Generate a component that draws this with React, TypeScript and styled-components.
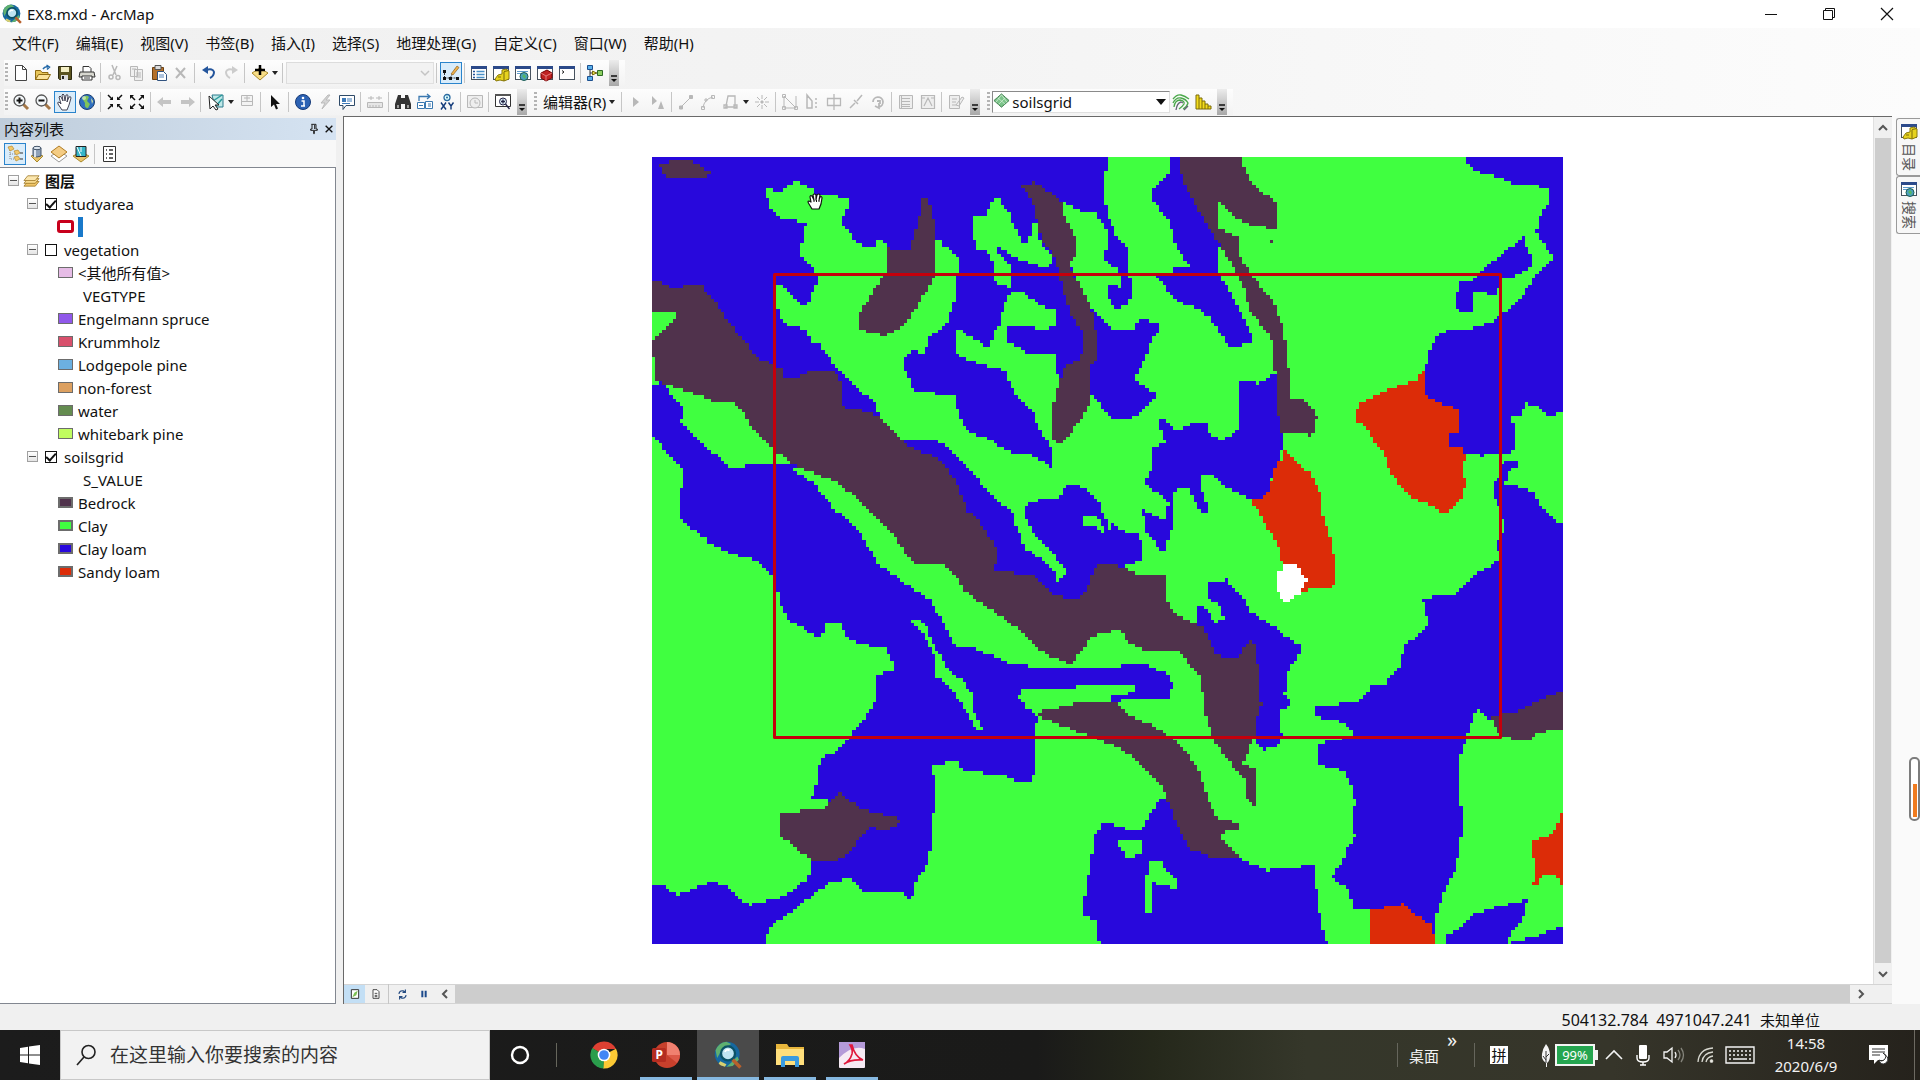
import React, { useMemo } from "react";
import styled, { createGlobalStyle, css } from "styled-components";

const GlobalStyle = createGlobalStyle`
  * { box-sizing: border-box; }
  html, body { margin: 0; padding: 0; }
  body {
    font-family: "Noto Sans", "Noto Sans CJK SC", sans-serif;
    font-size: 15px;
    color: #111;
    background: #f0f0f0;
    overflow: hidden;
  }
  button, select, input { font: inherit; color: inherit; }
  button { border: 0; background: none; padding: 0; }
  h1, h2, ul, p { margin: 0; padding: 0; font-weight: 400; font-size: inherit; }
  ul { list-style: none; }
`;

/* ------------------------------------------------------------------ */
/* Soil raster: each tile is a set of class polygons, burned to a grid */
/* ------------------------------------------------------------------ */

type SoilClass = "clay" | "loam" | "rock" | "sandy" | "none";

const SOIL: Record<SoilClass, string> = {
  clay: "#40ff40",
  loam: "#2808dc",
  rock: "#50324c",
  sandy: "#dc2c08",
  none: "#ffffff",
};

interface Tile {
  x: number;
  y: number;
  w: number;
  h: number;
  dx: number;
  dy: number;
  base: SoilClass;
  shapes: [SoilClass, string][];
}

const EXTENT_W = 2733;
const EXTENT_H = 2361;
const COLS = 264;
const ROWS = 228;

const TILES: Tile[] = [
  {
    x: 0, y: 0, w: 1344, h: 1149, dx: -6, dy: -21, base: "loam",
    shapes: [
      ["clay", "348,116 367,116 372,127 400,125 408,108 430,104 432,96 452,98 470,106 485,116 497,130 520,135 566,135 570,146 600,150 590,180 580,200 580,230 598,240 610,265 640,290 678,285 682,272 700,272 714,285 714,300 850,300 858,272 875,270 880,288 900,300 930,325 930,365 921,375 921,440 905,475 890,520 870,540 840,555 830,590 815,612 800,608 790,597 775,610 758,630 765,660 780,690 790,725 850,730 855,738 920,738 922,775 935,820 970,850 1020,870 1060,895 1070,905 1140,915 1180,935 1212,968 1212,910 1190,870 1165,830 1150,785 1100,735 1075,690 1065,660 1000,645 912,612 912,535 930,540 960,560 990,572 1010,590 1022,585 1030,545 1050,530 1055,490 1062,460 1085,430 1120,428 1145,445 1165,465 1220,480 1218,525 1180,540 1130,525 1075,525 1068,560 1080,580 1140,612 1222,615 1222,675 1232,690 1220,740 1240,800 1325,738 1345,755 1380,795 1380,1110 1375,1110 1365,1075 1350,1055 1325,1035 1295,1010 1250,1000 1240,1020 1235,1040 1185,1045 1140,1060 1128,1070 1128,1110 1145,1140 1180,1180 1200,1200 1120,1200 1110,1150 1095,1120 1085,1080 1050,1060 1010,1020 985,990 960,960 935,935 915,910 870,875 755,873 735,850 700,810 680,785 680,755 640,730 615,705 580,670 550,640 520,600 510,580 485,575 470,540 400,520 390,490 380,460 378,408 400,408 420,430 440,445 455,465 475,465 485,430 500,400 502,380 490,355 455,320 455,285 465,240 470,215 390,208 365,180 358,150 348,145"],
      ["clay", "1028,147 1052,147 1058,165 1078,190 1090,220 1105,245 1115,275 1135,275 1145,235 1155,210 1162,215 1165,255 1180,290 1205,320 1212,345 1175,352 1130,335 1085,320 1055,295 1035,293 1045,310 1060,330 1085,350 1085,415 1028,395 1028,330 1010,305 975,300 975,270 965,240 970,200 1010,198 1015,180"],
      ["clay", "1232,155 1270,170 1290,185 1340,192 1350,220 1375,240 1375,290 1362,320 1370,335 1360,385 1370,430 1375,460 1380,528 1360,515 1340,495 1325,480 1300,420 1275,375 1255,340 1255,325 1275,320 1260,250 1235,200"],
      ["clay", "40,700 60,708 150,738 200,755 255,762 285,795 320,840 370,890 430,945 270,948 250,957 230,945 180,900 130,855 92,820 98,775 70,740 45,710"],
      ["clay", "432,948 500,965 560,985 610,1035 680,1105 755,1185 770,1200 660,1200 640,1160 600,1115 550,1075 500,1010 465,980 435,965"],
      ["clay", "6,850 30,875 50,910 98,955 98,1005 92,1015 92,1110 120,1130 150,1155 235,1200 6,1200"],
      ["clay", "1296,1095 1320,1095 1330,1102 1380,1108 1380,1150 1350,1140 1325,1125 1296,1125"],
      ["rock", "28,45 65,35 130,35 150,50 185,70 165,84 60,84 40,70"],
      ["rock", "6,388 35,395 70,415 110,408 155,408 190,445 220,495 260,545 300,595 330,628 370,640 400,658 402,685 440,682 490,660 540,660 565,675 575,715 580,770 640,782 690,800 740,855 760,878 800,900 860,925 895,960 925,1010 950,1080 985,1110 1010,1150 1035,1200 770,1200 700,1125 630,1055 560,995 480,965 430,945 360,888 310,840 280,785 255,762 180,750 150,735 70,712 18,690 6,625"],
      ["rock", "815,147 832,150 845,185 858,255 850,385 800,470 770,520 705,558 632,540 632,490 665,430 695,385 715,365 715,295 740,302 780,295 795,250 808,200"],
      ["rock", "1112,110 1150,95 1185,115 1232,155 1245,200 1270,250 1285,300 1283,320 1255,330 1265,370 1300,420 1325,480 1335,530 1345,580 1335,635 1325,640 1325,740 1305,790 1265,845 1228,885 1212,870 1212,800 1205,780 1215,740 1230,690 1240,655 1290,625 1300,600 1300,550 1260,490 1240,430 1232,385 1215,320 1180,280 1160,210 1150,170 1130,120"],
      ["clay", "6,490 78,490 70,515 45,540 20,560 6,575"],
      ["clay", "6,625 18,625 18,690 25,700 6,705"],
    ],
  },
  {
    x: 1344, y: 0, w: 1389, h: 1149, dx: 1344, dy: -21, base: "clay",
    shapes: [
      ["loam", "0,21 18,21 18,60 8,90 12,130 20,190 38,225 50,260 80,292 80,375 92,390 100,410 90,440 78,465 50,478 30,465 25,430 18,405 45,403 52,415 62,410 62,375 50,358 22,340 10,325 18,295 28,270 22,240 0,215"],
      ["loam", "205,21 245,21 255,80 275,130 310,190 335,235 360,275 358,310 352,340 352,368 375,400 400,450 420,490 440,520 462,578 430,582 415,592 385,590 370,560 345,525 330,500 290,475 230,455 205,425 165,370 215,368 220,356 268,350 245,310 222,280 210,220 185,185 155,140 165,110 205,75"],
      ["loam", "0,510 15,515 40,542 100,543 120,505 145,505 150,517 182,522 178,545 160,560 145,600 130,640 105,685 125,705 172,735 140,770 110,795 85,810 40,810 0,770"],
      ["loam", "527,668 548,850 548,900 530,940 515,975 510,1015 480,1045 455,1048 390,1020 350,990 340,970 300,970 302,1010 310,1040 328,1088 300,1085 285,1050 265,1010 230,1012 222,1035 218,1080 215,1130 200,1195 185,1195 140,1145 130,1090 125,1072 150,1090 195,1110 205,1060 190,1040 155,1020 135,992 155,960 155,895 195,880 185,850 175,815 200,803 205,825 230,840 280,820 315,815 330,855 370,872 420,835 415,780 415,698 465,698 475,705 500,685"],
      ["loam", "0,1072 10,1090 18,1105 20,1140 28,1142 28,1115 45,1125 65,1142 118,1152 122,1200 0,1200 0,1145 20,1150 0,1110"],
      ["loam", "1098,21 1389,21 1389,780 1355,798 1335,792 1315,765 1280,760 1265,792 1235,795 1245,860 1240,905 1200,912 1150,912 1145,925 1130,912 1095,912 1085,895 1050,890 1048,852 1078,848 1078,780 1020,760 965,738 960,690 975,670 985,610 1010,560 1040,542 1100,542 1180,515 1210,490 1250,460 1290,400 1360,320 1335,290 1310,245 1325,190 1348,155 1345,115 1290,105 1240,100 1190,80 1140,70 1105,45"],
      ["loam", "1272,262 1280,290 1295,320 1290,355 1245,380 1200,388 1195,437 1165,437 1160,425 1118,427 1118,487 1085,487 1070,475 1075,395 1115,395 1150,355 1190,325 1235,290"],
      ["loam", "1212,937 1230,928 1265,940 1250,955 1222,960 1222,980 1212,1005 1250,1010 1300,1025 1320,1070 1360,1110 1389,1125 1389,1200 1200,1200 1212,1120 1195,1060 1185,1040 1185,990 1200,985 1205,950"],
      ["rock", "235,21 422,21 430,50 455,100 490,130 528,155 528,238 480,230 440,222 400,195 352,147 352,235 390,250 420,262 415,310 440,355 470,395 510,440 530,480 548,525 557,580 557,645 568,655 570,740 615,752 635,775 650,805 640,845 628,860 620,850 560,850 548,862 540,820 530,770 527,670 518,640 516,570 480,520 445,480 435,420 400,350 375,310 355,275 320,225 285,160 260,120 240,60"],
      ["rock", "506,268 517,268 517,281 506,281"],
      ["sandy", "770,780 785,755 830,735 890,710 950,690 970,665 970,735 1020,760 1078,780 1078,848 1048,852 1050,890 1085,895 1097,915 1090,960 1097,1000 1090,1035 1060,1065 1045,1090 1025,1090 1000,1065 950,1052 910,1020 875,970 850,910 820,870 805,840 768,810"],
      ["sandy", "550,895 580,925 630,970 660,1030 668,1090 690,1160 695,1200 540,1200 510,1145 480,1095 455,1048 480,1045 510,1015 518,980 530,940 548,925"],
    ],
  },
  {
    x: 0, y: 1149, w: 1344, h: 1212, dx: -6, dy: 1149, base: "clay",
    shapes: [
      ["loam", "160,0 200,20 250,42 320,60 370,105 385,165 400,210 412,240 440,255 475,275 515,295 525,248 570,248 590,290 640,315 705,320 722,350 735,385 722,398 682,400 680,470 655,520 610,575 590,600 560,635 520,650 505,685 505,720 485,768 475,773 545,773 520,808 500,900 485,960 485,990 470,1020 430,1050 380,1075 320,1088 300,1098 270,1075 235,1040 190,1025 140,1042 85,1065 60,1055 35,1035 0,1035 0,1220 340,1220 360,1160 420,1120 480,1070 540,1030 600,1015 640,1055 755,1055 775,1075 788,1070 792,1030 830,975 845,905 852,780 855,730 845,690 838,673 885,672 895,660 918,662 940,695 1055,703 1090,720 1140,722 1150,700 1150,580 1165,530 1130,505 1108,475 1110,445 1300,440 1310,433 1380,432 1380,380 1140,382 1130,370 1070,368 1010,340 960,320 915,318 900,285 860,215 845,185 780,140 680,68 655,20 640,0"],
      ["loam", "1020,0 1380,0 1380,180 1100,180 1020,90"],
      ["loam", "1380,845 1365,850 1330,885 1325,950 1310,1030 1300,1100 1300,1125 1340,1140 1348,1220 1380,1220"],
      ["clay", "778,235 800,235 830,265 848,310 880,360 900,395 940,425 968,465 972,510 990,550 1003,575 985,575 965,540 940,500 905,445 860,410 852,350 830,300 805,260 780,245"],
      ["clay", "1110,0 1175,0 1200,30 1235,75 1252,95 1218,130 1212,90 1170,55 1130,30"],
      ["rock", "735,0 1030,0 1045,40 1030,90 1150,108 1210,165 1280,180 1310,145 1330,95 1355,68 1380,75 1380,275 1330,290 1280,345 1268,380 1255,370 1190,345 1130,290 1070,240 1010,200 945,155 920,110 880,68 790,68 760,30"],
      ["rock", "1165,530 1170,515 1250,498 1300,485 1380,482 1380,612 1350,600 1290,578 1220,550"],
      ["rock", "390,818 445,818 450,808 520,808 548,775 575,758 600,785 640,808 755,838 740,860 700,872 665,862 630,890 600,935 560,962 485,962 440,925 390,885"],
    ],
  },
  {
    x: 1344, y: 1149, w: 1389, h: 1212, dx: 1344, dy: 1149, base: "clay",
    shapes: [
      ["loam", "0,0 125,0 125,60 70,80 0,80"],
      ["loam", "163,0 203,0 203,20 185,35 165,15"],
      ["loam", "320,122 370,122 378,108 385,125 430,170 450,215 490,240 540,275 605,320 595,350 570,380 558,410 555,465 575,490 540,515 540,560 548,590 525,622 490,628 465,600 465,400 350,360 300,275 288,250 290,193 315,200 330,225 345,252 370,235 358,195 320,175"],
      ["loam", "0,382 65,382 70,370 125,372 200,400 220,435 205,470 195,482 130,480 100,475 45,485 30,483 40,465 100,460 110,443 100,433 0,433"],
      ["loam", "1200,60 1180,70 1110,115 1060,165 965,175 978,210 985,260 920,310 900,360 895,398 870,400 860,430 810,433 800,465 780,483 720,492 650,497 643,510 645,530 725,545 755,575 755,590 715,600 650,610 652,670 700,685 735,695 755,740 765,790 755,830 765,890 740,930 720,975 695,1010 745,1050 758,1105 810,1108 1000,1180 1005,1160 1005,1140 1030,1060 1060,1000 1080,930 1088,850 1080,760 1080,655 1095,610 1110,560 1130,505 1170,540 1250,530 1389,470 1389,0 1195,0"],
      ["loam", "848,390 860,390 860,399 848,399"],
      ["loam", "0,855 20,848 40,855 70,865 120,875 160,810 185,775 210,780 320,945 405,950 440,965 500,990 640,975 650,1060 665,1150 685,1220 0,1220"],
      ["loam", "1285,1078 1275,1090 1270,1130 1235,1180 1215,1220 1045,1220 1035,1180 1080,1170 1115,1125 1200,1098"],
      ["loam", "1389,1158 1340,1175 1290,1195 1230,1202 1225,1220 1389,1220"],
      ["clay", "50,900 122,900 122,940 85,960 65,930"],
      ["clay", "145,963 180,963 205,995 238,1025 225,1042 185,1040 160,1022 160,1118 132,1118 132,1030 145,1000"],
      ["rock", "0,70 60,80 120,105 195,108 205,200 250,235 310,265 350,345 410,355 440,310 460,300 472,350 475,450 485,490 470,540 465,590 450,610 440,655 428,668 465,690 465,770 472,795 458,803 440,770 435,720 395,675 340,600 320,540 305,440 295,400 230,330 130,330 90,310 55,265 0,285"],
      ["rock", "0,485 45,485 90,525 165,560 240,610 285,670 310,730 330,790 350,835 410,848 432,862 370,875 362,895 385,915 415,948 320,948 270,925 235,860 205,790 185,740 140,690 70,630 0,600"],
      ["rock", "1170,528 1250,515 1320,480 1389,452 1389,567 1320,578 1285,605 1260,600 1200,590"],
      ["sandy", "528,0 692,0 705,60 710,120 690,148 620,150 595,170 560,80 545,60"],
      ["sandy", "810,1108 890,1098 910,1085 945,1125 1000,1160 1003,1220 810,1220"],
      ["sandy", "1389,808 1370,860 1345,890 1298,902 1298,950 1310,960 1310,1010 1298,1035 1315,1030 1330,1005 1370,1010 1389,1040"],
      ["none", "550,78 590,78 620,115 605,155 575,180 562,190 545,175 530,150 528,95 548,90"],
    ],
  },
];

function burnRaster(): Record<SoilClass, string> {
  const cw = EXTENT_W / COLS;
  const ch = EXTENT_H / ROWS;
  const grid: SoilClass[][] = Array.from({ length: ROWS }, () => new Array<SoilClass>(COLS).fill("clay"));

  for (const t of TILES) {
    const parsed = t.shapes.map(([cls, pts]) => ({
      cls,
      pts: pts.split(" ").map((p) => {
        const [x, y] = p.split(",").map(Number);
        return [x + t.dx, y + t.dy];
      }),
    }));
    for (let r = 0; r < ROWS; r++) {
      const cy = (r + 0.5) * ch;
      if (cy < t.y || cy >= t.y + t.h) continue;
      const c0 = Math.max(0, Math.ceil(t.x / cw - 0.5));
      const c1 = Math.min(COLS - 1, Math.ceil((t.x + t.w) / cw - 0.5) - 1);
      for (let c = c0; c <= c1; c++) grid[r][c] = t.base;
      for (const { cls, pts } of parsed) {
        const xs: number[] = [];
        for (let i = 0; i < pts.length; i++) {
          const [ax, ay] = pts[i];
          const [bx, by] = pts[(i + 1) % pts.length];
          if (ay <= cy !== by <= cy) xs.push(ax + ((cy - ay) / (by - ay)) * (bx - ax));
        }
        xs.sort((a, b) => a - b);
        for (let k = 0; k + 1 < xs.length; k += 2) {
          const from = Math.max(c0, Math.ceil(xs[k] / cw - 0.5));
          const to = Math.min(c1, Math.ceil(xs[k + 1] / cw - 0.5) - 1);
          for (let c = from; c <= to; c++) grid[r][c] = cls;
        }
      }
    }
  }

  const out: Record<SoilClass, string> = { clay: "", loam: "", rock: "", sandy: "", none: "" };
  grid.forEach((row, r) => {
    let start = 0;
    for (let c = 1; c <= COLS; c++) {
      if (c === COLS || row[c] !== row[start]) {
        out[row[start]] += `M${start} ${r}h${c - start}v1h${start - c}z`;
        start = c;
      }
    }
  });
  return out;
}

const MapSvg = styled.svg`
  display: block;
  height: 100%;
  max-width: 100%;
`;

function SoilMap() {
  const paths = useMemo(burnRaster, []);
  return (
    <MapSvg viewBox="0 0 911 787" role="img" aria-label="soilsgrid">
      <g transform={`scale(${911 / COLS} ${787 / ROWS})`} shapeRendering="crispEdges">
        {(Object.keys(paths) as SoilClass[]).map((k) => (
          <path key={k} d={paths[k]} fill={SOIL[k]} />
        ))}
      </g>
      <rect x="122.5" y="117.5" width="726" height="463" fill="none" stroke="#c4000c" strokeWidth="3" strokeLinejoin="round" />
      <g transform="translate(155 36)">
        <path
          d="M5 16L2 11Q0 8 2 8L4 9L3 4Q3 2 5 3L7 7L6 2Q7 0 9 2L9 7L10 2Q12 0 13 2L12 7L13 4Q15 3 15 5L14 11L12 16Z"
          fill="#fff"
          stroke="#111"
          strokeWidth="1.2"
          strokeLinejoin="round"
        />
        <path d="M7 7v2M9.500 7v2M12 7v2" stroke="#111" strokeWidth="1" />
      </g>
    </MapSvg>
  );
}

/* ------------------------------------------------------------------ */
/* Icons                                                               */
/* ------------------------------------------------------------------ */

const G = "#b8b8b8";
const win = (
  <>
    <rect x="1.500" y="2.500" width="15" height="13" fill="#fff" stroke="#47525e" />
    <path d="M1 2h16v3H1z" fill="#2c4a8a" />
  </>
);

const ICONS: Record<string, React.ReactNode> = {
  newdoc: <path d="M3.500 1.500h7l4 4v11h-11zM10.500 1.500v4h4" fill="#fff" stroke="#444" />,
  open: (
    <>
      <path d="M1.500 15.500v-9h5l1.500 2h6v7z" fill="#e8c65a" stroke="#8f6b12" />
      <path d="M1.500 15.500l3-5h12l-3 5z" fill="#fbe39a" stroke="#8f6b12" />
      <path d="M9 5q2-3 5-2M12.500 1l3 2-2.500 2.500" fill="none" stroke="#2268a8" strokeWidth="1.500" />
    </>
  ),
  save: (
    <>
      <path d="M2.500 2.500h13v13h-12l-1-1z" fill="#5b5420" stroke="#2c2a12" />
      <path d="M5 3h8v5H5z" fill="#f3eec4" />
      <path d="M5 11h7v5H5z" fill="#ddd" />
      <path d="M6 12h2v3H6z" fill="#222" />
    </>
  ),
  print: (
    <>
      <path d="M5 8V2.500h6l2 2V8" fill="#fff" stroke="#333" />
      <path d="M2 8h14l1 5H1z" fill="#d8d8d0" stroke="#333" />
      <path d="M4 12h10v4H4z" fill="#fff" stroke="#333" />
      <path d="M6 14h6" stroke="#444" />
    </>
  ),
  cut: (
    <g fill="none" stroke={G} strokeWidth="1.500">
      <path d="M6 1l4 10M11 2L7 11" />
      <circle cx="5" cy="13" r="2" />
      <circle cx="12" cy="13.500" r="2" />
    </g>
  ),
  copy: <path d="M2.500 2.500h7v10h-7zM6.500 5.500h8v11h-8zM8 9h5M8 11h5M8 13h5M4 5h4" fill="#f0f0f0" stroke={G} />,
  paste: (
    <>
      <path d="M2.500 3.500h11v12h-11z" fill="#b4702a" stroke="#6d4212" />
      <path d="M5 1.500h6v4H5z" fill="#ddd" stroke="#555" />
      <path d="M7.500 7.500h6l3 3v6h-9z" fill="#fff" stroke="#30527f" />
      <path d="M9 11h5M9 13h5" stroke="#5a86ba" />
    </>
  ),
  del: <path d="M4 4l9 10M13 4L4 14" stroke={G} strokeWidth="2" />,
  undo: (
    <>
      <path d="M6 6q7-2 8 2 0 4-4 6" fill="none" stroke="#24559c" strokeWidth="2" />
      <path d="M2 6l6-4v8z" fill="#24559c" />
    </>
  ),
  redo: (
    <>
      <path d="M12 6q-7-2-8 2 0 4 4 6" fill="none" stroke="#ccc" strokeWidth="2" />
      <path d="M16 6l-6-4v8z" fill="#ccc" />
    </>
  ),
  add: (
    <>
      <path d="M1 9l8-5 8 5-8 7z" fill="#f7dd86" stroke="#a98a2c" />
      <path d="M9 1v10M4 6h10" stroke="#000" strokeWidth="2.500" />
    </>
  ),
  editor: (
    <>
      <path d="M2.500 14h13M2.500 9v5M8 14l6-10" fill="none" stroke="#333" strokeDasharray="2 1" />
      <path d="M1 13h3v3H1zM7 13h3v3H7zM14 13h3v3h-3zM1 6h3v3H1z" fill="#111" />
      <path d="M9 10l6-8 2 1.500L11 11z" fill="#f0b24c" stroke="#805010" strokeWidth=".6" />
    </>
  ),
  toc: (
    <>
      {win}
      <path d="M3 7.500h2M3 10.500h2M3 13.500h2" stroke="#24559c" strokeWidth="1.500" />
      <path d="M6.500 7.500h8M6.500 10.500h8M6.500 13.500h8" stroke="#4a90c8" strokeWidth="1.500" />
    </>
  ),
  catalog: (
    <>
      {win}
      <path d="M6 11l4-1V6l4-1 3 2v8l-5 2-4-1-4 1-1-2z" fill="#e6d21e" stroke="#8a7a0a" />
      <path d="M12 7.500l5-1M12 8v9M6 13h3" stroke="#7a6a08" />
    </>
  ),
  search: (
    <>
      {win}
      <path d="M3 7.500h11M3 9.500h5" stroke="#5d9acb" />
      <circle cx="10" cy="12.500" r="4" fill="#4c9fc0" stroke="#1c5c50" />
      <path d="M8 12l2-2 2 2-1 3z" fill="#55b665" />
    </>
  ),
  toolbox: (
    <>
      {win}
      <path d="M5 9l6-3 5 3v5l-6 3-5-3z" fill="#c02222" stroke="#700" />
      <path d="M5 9l5 3 6-3M10 12v5" stroke="#f0a0a0" strokeWidth=".7" fill="none" />
    </>
  ),
  python: (
    <>
      {win}
      <path d="M4 6.500l2 1.500-2 1.500" fill="none" stroke="#222" />
    </>
  ),
  model: (
    <>
      <path d="M4 3v12M4 9h10" stroke="#333" fill="none" />
      <path d="M1.500 1.500h5v4h-5zM1.500 12.500h5v4h-5z" fill="#5ab0ea" stroke="#1c4f8e" />
      <path d="M6.500 7l4 2-4 2z" fill="#e8dc4a" stroke="#7d6f10" />
      <path d="M11.500 6.500h5v5h-5z" fill="#8ccf60" stroke="#2c6a24" />
    </>
  ),
  zoomin: (
    <>
      <path d="M11 11l5 5" stroke="#a57848" strokeWidth="3" />
      <circle cx="7.500" cy="7.500" r="5.500" fill="#f4f8fa" stroke="#555" strokeWidth="1.300" />
      <path d="M4.500 7.500h6M7.500 4.500v6" stroke="#111" strokeWidth="2" />
    </>
  ),
  zoomout: (
    <>
      <path d="M11 11l5 5" stroke="#a57848" strokeWidth="3" />
      <circle cx="7.500" cy="7.500" r="5.500" fill="#f4f8fa" stroke="#555" strokeWidth="1.300" />
      <path d="M4.500 7.500h6" stroke="#111" strokeWidth="2" />
    </>
  ),
  pan: (
    <path
      d="M6 17l-4-6q-1-2 1-2l2 2-2-7q1-2 2 0l2 4-1-6q1-2 2 0l1 6 1-6q2-1 2 1l-1 6 2-5q2-1 2 1l-2 7-2 5z"
      fill="#fff"
      stroke="#445"
    />
  ),
  globe: (
    <>
      <circle cx="9" cy="9" r="7.500" fill="#2f6fc0" stroke="#1c3f70" />
      <path d="M4 5q4-4 7-1l-2 4 3 3-2 4q-4 0-3-5z" fill="#7fc45a" />
      <path d="M13 5l2 3-1 3z" fill="#e0e8a0" />
      <circle cx="6" cy="5" r="2" fill="#fff" opacity=".5" />
    </>
  ),
  fixin: (
    <g stroke="#111" strokeWidth="1.500" fill="#111">
      <path d="M2 2l4 4M16 2l-4 4M2 16l4-4M16 16l-4-4" />
      <path d="M3.500 7H7V3.500zM14.500 7H11V3.500zM3.500 11H7v3.500zM14.500 11H11v3.500z" stroke="none" />
    </g>
  ),
  fixout: (
    <g stroke="#111" strokeWidth="1.500" fill="#111">
      <path d="M3 3l4 4M15 3l-4 4M3 15l4-4M15 15l-4-4" />
      <path d="M2 6V2h4zM16 6V2h-4zM2 12v4h4zM16 12v4h-4z" stroke="none" />
    </g>
  ),
  back: <path d="M1 9l6-5v3h8v4H7v3z" fill="#c4c4c4" />,
  forward: <path d="M17 9l-6-5v3H3v4h8v3z" fill="#c4c4c4" />,
  selfeat: (
    <>
      <path d="M5 2h11v12H8z" fill="#bfe8e8" stroke="#2a7a8c" />
      <path d="M6 8l9-6M9 13l6-7" stroke="#2a9a9c" strokeWidth="1.500" />
      <path d="M2 3l1 13 3-3 3 4 2-1-3-4h4z" fill="#fff" stroke="#222" />
    </>
  ),
  clearsel: <path d="M3.500 2.500h11v10h-11zM3.500 8.500h11M9 2v6M6 5h6" fill="#f3f3f3" stroke={G} />,
  arrow: <path d="M5 2v12l3-2.500 2 5 2-1-2-4.500h4z" fill="#111" />,
  info: (
    <>
      <circle cx="9" cy="9" r="7.500" fill="#2c62b4" stroke="#163a78" />
      <circle cx="9" cy="5" r="1.300" fill="#fff" />
      <path d="M7.500 8H10v5h1M7 13h4" stroke="#fff" strokeWidth="1.500" fill="none" />
    </>
  ),
  link: <path d="M12 2L5 10h4l-3 6 8-9h-4l4-5z" fill="#d4d4d4" stroke="#bbb" />,
  popup: (
    <>
      <path d="M1.500 2.500h15v10H8l-3 4v-4H1.500z" fill="#fff" stroke="#2e4a68" />
      <path d="M4 5h4v4H4z" fill="#3e7ab8" />
      <path d="M9 6h5M9 8h5M4 10.500h8" stroke="#3e7ab8" />
    </>
  ),
  measure: (
    <>
      <path d="M1.500 9.500h15v5h-15z" fill="#e6e6e6" stroke={G} />
      <path d="M4 12v2M7 12v2M10 12v2M13 12v2M2 5h6M10 5h6M5 3v4M13 3v4" stroke={G} />
    </>
  ),
  find: (
    <>
      <path d="M4 2h3v3h4V2h3l3 9v5h-6v-5H7v5H1v-5z" fill="#333" />
      <path d="M3 12h2v3H3zM13 12h2v3h-2z" fill="#999" />
    </>
  ),
  route: (
    <g fill="#fff" stroke="#3a78b0">
      <path d="M3 8V3.500h10M11 1l3 2.500L11 6" fill="none" strokeWidth="1.300" />
      <path d="M1.500 9.500h7v6h-7zM3 12.500h4" />
      <path d="M9.500 8.500h7v7h-7zM12 11h3M12 13h3" />
    </g>
  ),
  gotoxy: (
    <>
      <circle cx="9" cy="4.500" r="3" fill="#dff" stroke="#2a6aa0" strokeWidth="1.300" />
      <circle cx="9" cy="4.500" r="1" fill="#2a6aa0" />
      <path d="M3 9.500l5 7M8 9.500l-5 7M10.500 9.500l2.500 3.500 2.500-3.500M13 13v3.500" stroke="#123a7a" strokeWidth="1.400" fill="none" />
    </>
  ),
  time: (
    <g fill="#eee" stroke={G}>
      <path d="M1.500 2.500h15v12h-15z" />
      <circle cx="9" cy="10" r="5" />
      <path d="M9 7v3h3" />
    </g>
  ),
  viewer: (
    <>
      <path d="M1.500 1.500h15v12h-15z" fill="#fff" stroke="#333" />
      <path d="M1 1h16v2H1z" fill="#555" />
      <circle cx="9" cy="8.500" r="3.500" fill="#dceef8" stroke="#224" />
      <path d="M7 8.500h4M9 6.500v4M11.500 11l4 5" stroke="#224" strokeWidth="1.300" />
    </>
  ),
  edittool: <path d="M6 4v10l6-5z" fill={G} />,
  editanno: <path d="M3 3v9l5-4zM9 16l3-8 3 8z" fill={G} />,
  line: <path d="M4 14L14 4M2.500 13h3v3h-3zM12.500 2.500h3v3h-3z" stroke={G} fill={G} />,
  arc: <path d="M4 15Q5 6 14 4M2.500 13.500h3v3h-3zM12.500 2.500h3v3h-3zM6 6h2v2H6z" stroke={G} fill="none" />,
  trace: <path d="M3 14h12M4 13L6 3h7v10M2 12h3v3H2zM12 12h3v3h-3z" stroke={G} fill="none" strokeWidth="1.300" />,
  point: <path d="M9 2v4M9 12v4M2 9h4M12 9h4M4 4l3 3M14 4l-3 3M4 14l3-3M14 14l-3-3M8 8h2v2H8z" stroke={G} fill={G} />,
  vertices: <path d="M3 3l12 12M3 3v12h12V3M1.500 1.500h3v3h-3zM13.500 13.500h3v3h-3zM1.500 13.500h3v3h-3z" stroke={G} fill="none" />,
  reshape: <path d="M4 2v13h5V8zM13 5v2M13 9v2M13 13v2" stroke={G} fill="none" strokeWidth="1.500" />,
  cutpoly: <path d="M2.500 5.500h13v7h-13zM9 1v16" stroke={G} fill="none" strokeWidth="1.300" />,
  split: <path d="M3 15L8 10M10 8l5-6M7 7l4 4" stroke={G} fill="none" strokeWidth="1.500" />,
  rotate: <path d="M4 9a5 5 0 1 1 6 5M10 10v5l-4-2M8 8h3v3" stroke={G} fill="none" strokeWidth="1.800" />,
  attrs: <path d="M2.500 2.500h13v13h-13zM5 5.500h8M5 8.500h8M5 11.500h8M5 13.500h8M4.500 3v12" stroke={G} fill="#eee" />,
  sketch: <path d="M2.500 2.500h13v13h-13zM5 13l4-8 4 8M3 5h3M12 5h3" stroke={G} fill="#eee" strokeWidth="1.200" />,
  feature: <path d="M2.500 2.500h10v13h-10zM5 6h5M5 9h4M5 12h4M9 12l6-8 2 1-5 8z" stroke={G} fill="#eee" />,
  contour: (
    <g fill="none" strokeWidth="1.300">
      <path d="M1 6q4-5 8-4t8 4M1 10q3-6 8-5t7 5q-1 4-5 6M2 14q1-7 6-7 5 1 4 4-1 2-5 5" stroke="#4aa84a" />
      <path d="M4 17q1-7 5-8l2 1M12 17l4-4" stroke="#667" />
    </g>
  ),
  histogram: (
    <>
      <path d="M2 2h3v3h3v3h3v3h3v2h3v3H2z" fill="#f4dc1c" stroke="#7a6a08" />
      <path d="M5 5v11M8 8v8M11 11v5M14 13v3" stroke="#7a6a08" />
    </>
  ),
  listorder: (
    <>
      <path d="M4 5v9h5M4 9h5" stroke="#888" fill="none" strokeDasharray="1 1" />
      <path d="M2 2l4-1 2 3-4 2zM8 6l4-1 2 3-4 2zM8 12l4-1 2 3-4 2z" fill="#f3c96a" stroke="#b98a2c" strokeWidth=".7" />
      <path d="M14 8h3M14 14h3" stroke="#333" />
    </>
  ),
  listsource: (
    <>
      <path d="M3 11l6-2 6 2-6 6z" fill="#e9c46c" stroke="#a98a2c" />
      <path d="M5 3v8q4 2 8 0V3z" fill="#8fa2b8" stroke="#45566a" />
      <path d="M7 5v7" stroke="#dce6f0" strokeWidth="2" />
      <ellipse cx="9" cy="3" rx="4" ry="1.700" fill="#dce6f0" stroke="#45566a" />
    </>
  ),
  listvis: (
    <>
      <path d="M1 11l8-5 8 5-8 6z" fill="#fff" stroke="#999" />
      <path d="M1 7l8-6 8 6-8 6z" fill="#f4cc84" stroke="#b07c22" />
    </>
  ),
  listsel: (
    <>
      <path d="M1 11l8-4 8 4-8 6z" fill="#e9c46c" stroke="#a98a2c" />
      <path d="M4 1.500h10v10H4z" fill="#35b5c8" stroke="#222" />
      <path d="M5 2l4 9M9 2v5" stroke="#fff" />
    </>
  ),
  options: (
    <>
      <path d="M3.500 1.500h12v15h-12z" fill="#fff" stroke="#333" />
      <path d="M6 5h1M9 5h4M6 9h1M9 9h4M6 13h1M9 13h4" stroke="#333" strokeWidth="1.300" />
    </>
  ),
  layers: (
    <>
      <path d="M1 15l4-5h12l-4 5z" fill="#f1c668" stroke="#9a7420" strokeWidth=".8" />
      <path d="M1 12l4-5h12l-4 5z" fill="#f7d98c" stroke="#9a7420" strokeWidth=".8" />
      <path d="M1 9l4-5h12l-4 5z" fill="#fbe6ae" stroke="#9a7420" strokeWidth=".8" />
    </>
  ),
  rasterlayer: (
    <>
      <path d="M1 8l8-7 8 7-8 7z" fill="#7cc48a" stroke="#3d7a4a" />
      <path d="M5 5l8 7M9 2L3 10M13 5L6 12M9 2l6 8" stroke="#d6f0d8" strokeWidth=".8" />
    </>
  ),
  dataview: (
    <>
      <path d="M3.500 2.500h11v13h-11z" fill="#fff" stroke="#333" strokeWidth="1.500" />
      <path d="M5 14l3-7 5-3-2 7z" fill="#7cbf54" />
    </>
  ),
  layoutview: <path d="M4.500 2.500h6l3 3v10h-9zM7 8h4M7 11h4M7 13h4" fill="#fff" stroke="#333" strokeWidth="1.300" />,
  refresh: (
    <path d="M4 8q1-5 6-4l3 2M13 2v4H9M14 10q-1 5-6 4l-3-2M5 16v-4h4" fill="none" stroke="#234a80" strokeWidth="1.600" />
  ),
  pause: <path d="M5 4h3v10H5zM10 4h3v10h-3z" fill="#1c4a8c" />,
  pin: <path d="M5 2h7v7h2v2H9.500v5h-1v-5H4V9h2V2M10 3v6" fill="none" stroke="#222" strokeWidth="1.500" />,
  close: <path d="M4 4l10 10M14 4L4 14" stroke="#111" strokeWidth="2" />,
  arcmap: (
    <>
      <circle cx="8.500" cy="8.500" r="8" fill="#1668a0" />
      <path d="M1 6q2-5 7-5.500l3 1.500-6 4-3 5zM11 14l4-4 1 2-4 4-4 .5z" fill="#5fb070" />
      <path d="M4 13l4 2-1 1.500q-3-.5-4-2z" fill="#d8d070" />
      <circle cx="9" cy="8" r="4.500" fill="#bfe4f2" stroke="#0b5266" strokeWidth="1.500" />
      <path d="M7 7q1-2 3-1" stroke="#fff" strokeWidth="1.200" />
      <path d="M12 12l5 5" stroke="#b8602c" strokeWidth="2.200" />
    </>
  ),
};

function Icon({ name, size = 18 }: { name: string; size?: number }) {
  return (
    <svg width={size} height={size} viewBox="0 0 18 18" fill="none" aria-hidden="true">
      {ICONS[name]}
    </svg>
  );
}

/* ------------------------------------------------------------------ */
/* Window frame                                                        */
/* ------------------------------------------------------------------ */

const Screen = styled.div`
  display: flex;
  flex-direction: column;
  height: 100vh;
  min-width: 1280px;
`;

const TitleBar = styled.header`
  display: flex;
  align-items: center;
  height: 28px;
  padding: 0 4px 0 2px;
  background: #fff;
`;

const WindowTitle = styled.h1`
  flex: 1;
  padding-left: 5px;
  font-size: 15px;
  line-height: 28px;
`;

const CaptionButton = styled.button`
  display: grid;
  place-items: center;
  width: 58px;
  height: 28px;
`;

const MenuBar = styled.nav`
  display: flex;
  gap: 17px;
  align-items: center;
  height: 30px;
  padding: 0 12px;
  background: linear-gradient(90deg, #f0f0f0 0, #f4f4f4 50%, #fcfcfc 100%);
`;

const MenuItem = styled.button`
  font-size: 15px;
  line-height: 24px;
  white-space: nowrap;
`;

const ToolbarArea = styled.div`
  background: linear-gradient(90deg, #f0f0f0 0, #f4f4f4 50%, #fcfcfc 100%);
`;

const ToolbarRow = styled.div`
  display: flex;
  align-items: center;
  height: 29px;
  padding-left: 4px;
`;

const Toolbar = styled.div`
  display: flex;
  align-items: center;
  height: 26px;
  background: linear-gradient(#fdfdfd, #f3f3f3);
`;

const Grip = styled.span`
  width: 3px;
  height: 20px;
  margin: 0 2px 0 1px;
  background: repeating-linear-gradient(#b4b4b4 0 2px, transparent 2px 4px);
`;

const ToolButton = styled.button<{ $active?: boolean; $wide?: boolean }>`
  display: flex;
  align-items: center;
  justify-content: center;
  width: ${(p) => (p.$wide ? 32 : 22)}px;
  height: 22px;
  ${(p) =>
    p.$active &&
    css`
      background: #d9ecfa;
      border: 1px solid #2a84cc;
    `}
`;

const Caret = styled.span`
  width: 0;
  margin-left: 3px;
  border: 3px solid transparent;
  border-top: 4px solid #222;
  border-bottom: 0;
`;

const Divider = styled.span`
  width: 1px;
  height: 20px;
  margin: 0 3px 0 2px;
  background: #c6c6c6;
`;

const Overflow = styled.button`
  display: flex;
  align-items: flex-end;
  justify-content: center;
  width: 10px;
  height: 26px;
  margin: 0 6px 0 3px;
  padding-bottom: 3px;
  background: linear-gradient(#ececec, #a8a8a8);
`;

const TextTool = styled.button`
  display: flex;
  align-items: center;
  height: 24px;
  padding: 0 4px;
  font-size: 15px;
  white-space: nowrap;
`;

const ComboBox = styled.label<{ $width: number; $disabled?: boolean }>`
  display: flex;
  align-items: center;
  width: ${(p) => p.$width}px;
  height: 22px;
  padding: 0 3px 0 0;
  border: 1px solid ${(p) => (p.$disabled ? "#dcdcdc" : "#8a8a8a")};
  border-right-color: #e0e0e0;
  border-bottom-color: #e0e0e0;
  background: ${(p) => (p.$disabled ? "#f2f2f2" : "#fff")};
`;

const ComboSelect = styled.select`
  flex: 1;
  min-width: 0;
  height: 20px;
  padding: 0 2px;
  border: 0;
  background: transparent;
  appearance: none;
  font-size: 15px;
  line-height: 20px;
`;

const Workspace = styled.main`
  display: flex;
  flex: 1;
  min-height: 0;
`;

/* ------------------------------------------------------------------ */
/* Table of contents                                                   */
/* ------------------------------------------------------------------ */

const TocPanel = styled.aside`
  display: flex;
  flex-direction: column;
  width: 336px;
  padding-top: 2px;
`;

const PanelHeader = styled.div`
  display: flex;
  align-items: center;
  height: 22px;
  padding-left: 4px;
  background: linear-gradient(90deg, #bfcddb, #d5e3f2);
`;

const PanelTitle = styled.h2`
  flex: 1;
  font-size: 15px;
  line-height: 22px;
`;

const PanelButton = styled.button`
  display: grid;
  place-items: center;
  width: 15px;
  height: 20px;
`;

const PanelTools = styled.div`
  display: flex;
  align-items: center;
  height: 27px;
  padding-left: 4px;
  background: #f8f8f8;
`;

const Tree = styled.ul`
  flex: 1;
  padding-top: 1px;
  border: 1px solid #828790;
  border-left: 0;
  background: #fff;
`;

const TreeRow = styled.li<{ $indent: number }>`
  display: flex;
  align-items: center;
  height: 23px;
  padding-left: ${(p) => p.$indent}px;
  line-height: 22px;
  white-space: nowrap;
`;

const TreeLabel = styled.label<{ $bold?: boolean; $gap?: number }>`
  padding-left: ${(p) => p.$gap ?? 7}px;
  font-weight: ${(p) => (p.$bold ? 700 : 400)};
`;

const LayersIcon = styled.span`
  display: flex;
  padding-left: 4px;
`;

const Expander = styled.button`
  display: grid;
  place-items: center;
  width: 11px;
  height: 11px;
  border: 1px solid #a0a0a0;
  background: linear-gradient(#fff, #e4e4e4);

  &::after {
    content: "";
    width: 7px;
    height: 1px;
    background: #555;
  }
`;

const LayerCheck = styled.input`
  appearance: none;
  display: grid;
  place-items: center;
  width: 12px;
  height: 12px;
  margin: 0 0 0 7px;
  border: 1px solid #111;
  background: #fff;

  &:checked::after {
    content: "";
    width: 4px;
    height: 8px;
    margin-top: -2px;
    border: solid #111;
    border-width: 0 2px 2px 0;
    transform: rotate(42deg);
  }
`;

const Swatch = styled.span<{ $color: string; $heavy?: boolean }>`
  width: 15px;
  height: 11px;
  border: ${(p) => (p.$heavy ? 2 : 1)}px solid #6c6c6c;
  background: ${(p) => p.$color};
`;

const OutlineSwatch = styled.span`
  width: 17px;
  height: 13px;
  border: 3px solid #c8001c;
  border-radius: 3px;
  background: #fff;
`;

const LabelCaret = styled.span`
  width: 5px;
  height: 20px;
  margin-left: 4px;
  background: #1979ca;
`;

/* ------------------------------------------------------------------ */
/* Map view                                                            */
/* ------------------------------------------------------------------ */

const MapColumn = styled.section`
  display: flex;
  flex-direction: column;
  flex: 1;
  min-width: 0;
  margin-left: 7px;
  border-left: 1px solid #696969;
  border-top: 1px solid #696969;
`;

const MapAndScroll = styled.div`
  display: flex;
  flex: 1;
  min-height: 0;
`;

const MapCanvas = styled.div`
  display: flex;
  flex: 1;
  justify-content: center;
  min-width: 0;
  padding: 40px 3px 40px 0;
  background: #fff;
`;

const VScroll = styled.div`
  display: flex;
  flex-direction: column;
  width: 19px;
  border-left: 1px solid #e0e0e0;
  background: #f0f0f0;
`;

const ScrollButton = styled.button`
  display: grid;
  place-items: center;
  flex: none;
  width: 18px;
  height: 21px;
`;

const VThumb = styled.span`
  flex: 1;
  margin: 0 1px;
  background: #cdcdcd;
`;

const BottomStrip = styled.div`
  display: flex;
  align-items: center;
  height: 20px;
  padding-right: 21px;
  border-top: 1px solid #d4d4d4;
  border-bottom: 1px solid #d4d4d4;
`;

const ViewButton = styled.button<{ $active?: boolean }>`
  display: grid;
  place-items: center;
  width: 21px;
  height: 18px;
  background: ${(p) => (p.$active ? "#c3dff5" : "none")};
`;

const HThumb = styled.span`
  flex: 1;
  height: 18px;
  background: #cdcdcd;
`;

const SideRail = styled.aside`
  display: flex;
  flex-direction: column;
  align-items: flex-end;
  width: 28px;
  padding-top: 2px;
  background: #fafafa;
`;

const SideTab = styled.button`
  display: flex;
  flex-direction: column;
  align-items: center;
  width: 24px;
  height: 58px;
  padding-top: 3px;
  gap: 3px;
  border: 1px solid #9a9a9a;
  border-right: 0;
  border-radius: 3px 0 0 3px;
  background: #f7f7f7;
  color: #555;
  font-size: 14px;
  line-height: 18px;

  span {
    writing-mode: vertical-rl;
    text-orientation: sideways;
  }
`;

const RailSpacer = styled.span`
  flex: 1 1 523px;
`;

const RailFoot = styled.span`
  flex: 1 1 183px;
`;

const Gauge = styled.div`
  display: flex;
  align-items: flex-end;
  justify-content: center;
  width: 11px;
  height: 64px;
  padding-bottom: 2px;
  border: 2px solid #7c7c7c;
  border-radius: 5px;
  background: #fff;

  &::after {
    content: "";
    width: 4px;
    height: 33px;
    background: #f07c20;
  }
`;

const StatusBar = styled.footer`
  display: flex;
  align-items: center;
  justify-content: flex-end;
  height: 26px;
  padding: 6px 100px 0 0;
  background: #f0f0f0;
  font-size: 15px;
  line-height: 20px;
`;

const Coordinate = styled.span`
  margin-right: 8px;
  font-size: 16px;
`;

/* ------------------------------------------------------------------ */
/* Taskbar                                                             */
/* ------------------------------------------------------------------ */

const Taskbar = styled.footer`
  display: flex;
  align-items: stretch;
  height: 50px;
  background: linear-gradient(90deg, #1c1c1c 0, #1a1a19 54%, #25281b 60%, #35372a 68%, #36352a 84%, #25221c 100%);
  color: #f2f2f2;
`;

const StartButton = styled.button`
  display: grid;
  place-items: center;
  width: 60px;
`;

const SearchBox = styled.label`
  display: flex;
  align-items: center;
  gap: 13px;
  width: 430px;
  padding: 0 14px;
  border: 1px solid #c8c8c8;
  background: #f2f2f2;
`;

const SearchInput = styled.input`
  flex: 1;
  min-width: 0;
  padding: 0;
  border: 0;
  background: transparent;
  font-size: 19px;
  line-height: 28px;

  &::placeholder {
    color: #333;
    opacity: 1;
  }
`;

const TaskButton = styled.button<{ $state?: "open" | "active" }>`
  display: grid;
  place-items: center;
  width: 62px;
  background: ${(p) => (p.$state === "active" ? "#4a4a4a" : "none")};
  background-clip: padding-box;
  ${(p) =>
    p.$state &&
    css`
      box-shadow: inset 0 -3px #86b8e0;
    `}
  border-right: ${(p) => (p.$state === "open" ? 5 : 0)}px solid transparent;
  border-left: ${(p) => (p.$state === "open" ? 5 : 0)}px solid transparent;
`;

const TaskDivider = styled.span<{ $left?: number; $right?: number }>`
  align-self: center;
  width: 1px;
  height: 24px;
  margin: 0 ${(p) => p.$right ?? 0}px 0 ${(p) => p.$left ?? 0}px;
  background: #66665c;
`;

const Tray = styled.div`
  display: flex;
  flex: 1;
  align-items: center;
  justify-content: flex-end;
`;

const TrayButton = styled.button<{ $width: number }>`
  display: grid;
  place-items: center;
  width: ${(p) => p.$width}px;
  height: 50px;
`;

const DesktopLabel = styled.button`
  padding: 0 0 0 11px;
  font-size: 15px;
`;

const Chevrons = styled.span`
  align-self: flex-start;
  width: 35px;
  padding-left: 8px;
  font-size: 20px;
  line-height: 20px;
`;

const Ime = styled.button`
  width: 18px;
  height: 18px;
  background: #fff;
  color: #111;
  font-size: 15px;
  line-height: 16px;
`;

const Clock = styled.time`
  width: 84px;
  margin-left: 6px;
  font-size: 15px;
  line-height: 23px;
  text-align: center;
`;

const PeekEdge = styled.span`
  width: 6px;
  height: 50px;
  margin-left: 4px;
  border-left: 1px solid #6d6a62;
`;

/* ------------------------------------------------------------------ */

const MENUS = ["文件(F)", "编辑(E)", "视图(V)", "书签(B)", "插入(I)", "选择(S)", "地理处理(G)", "自定义(C)", "窗口(W)", "帮助(H)"];

function Tools({ items, active }: { items: string[]; active?: string }) {
  return (
    <>
      {items.map((name, i) => {
        if (name === "|") return <Divider key={i} />;
        const wide = name.endsWith("+");
        const id = wide ? name.slice(0, -1) : name;
        return (
          <ToolButton key={i} type="button" aria-label={id} $wide={wide} $active={id === active}>
            <Icon name={id} />
            {wide && <Caret />}
          </ToolButton>
        );
      })}
    </>
  );
}

function OverflowButton() {
  return (
    <Overflow type="button" aria-label="more">
      <svg width="8" height="8" viewBox="0 0 8 8" aria-hidden="true">
        <path d="M1 1h6" stroke="#111" strokeWidth="1.500" />
        <path d="M1 4h6L4 7z" fill="#111" />
      </svg>
    </Overflow>
  );
}

function Chevron({ dir }: { dir: "up" | "down" | "left" | "right" }) {
  const d = { up: "M2 8l4-4 4 4", down: "M2 4l4 4 4-4", left: "M8 2L4 6l4 4", right: "M4 2l4 4-4 4" }[dir];
  return (
    <svg width="12" height="12" viewBox="0 0 12 12" aria-hidden="true">
      <path d={d} fill="none" stroke="#555" strokeWidth="2" />
    </svg>
  );
}

interface LegendItem {
  label: string;
  color?: string;
}

const VEGETATION: LegendItem[] = [
  { label: "<其他所有值>", color: "#e6bce6" },
  { label: "VEGTYPE" },
  { label: "Engelmann spruce", color: "#9058ea" },
  { label: "Krummholz", color: "#d8506c" },
  { label: "Lodgepole pine", color: "#6cb0e0" },
  { label: "non-forest", color: "#dca060" },
  { label: "water", color: "#648c50" },
  { label: "whitebark pine", color: "#c0fc60" },
];

const SOILS: LegendItem[] = [
  { label: "S_VALUE" },
  { label: "Bedrock", color: SOIL.rock },
  { label: "Clay", color: SOIL.clay },
  { label: "Clay loam", color: SOIL.loam },
  { label: "Sandy loam", color: SOIL.sandy },
];

function Legend({ items, heavy }: { items: LegendItem[]; heavy?: boolean }) {
  return (
    <>
      {items.map((it) =>
        it.color ? (
          <TreeRow key={it.label} $indent={58}>
            <Swatch $color={it.color} $heavy={heavy} />
            <TreeLabel as="span" $gap={5}>{it.label}</TreeLabel>
          </TreeRow>
        ) : (
          <TreeRow key={it.label} $indent={83}>{it.label}</TreeRow>
        )
      )}
    </>
  );
}

function LayerRow({ name, checked }: { name: string; checked: boolean }) {
  return (
    <TreeRow $indent={27}>
      <Expander type="button" aria-label={`collapse ${name}`} />
      <LayerCheck type="checkbox" id={`layer-${name}`} defaultChecked={checked} />
      <TreeLabel htmlFor={`layer-${name}`}>{name}</TreeLabel>
    </TreeRow>
  );
}

function TableOfContents() {
  return (
    <TocPanel>
      <PanelHeader>
        <PanelTitle>内容列表</PanelTitle>
        <PanelButton type="button" aria-label="pin"><Icon name="pin" size={12} /></PanelButton>
        <PanelButton type="button" aria-label="close"><Icon name="close" size={12} /></PanelButton>
      </PanelHeader>
      <PanelTools>
        <Tools items={["listorder", "listsource", "listvis", "listsel", "|", "options"]} active="listorder" />
      </PanelTools>
      <Tree>
        <TreeRow $indent={8}>
          <Expander type="button" aria-label="collapse layers" />
          <LayersIcon><Icon name="layers" size={17} /></LayersIcon>
          <TreeLabel as="span" $bold $gap={5}>图层</TreeLabel>
        </TreeRow>
        <LayerRow name="studyarea" checked />
        <TreeRow $indent={57}>
          <OutlineSwatch />
          <LabelCaret />
        </TreeRow>
        <LayerRow name="vegetation" checked={false} />
        <Legend items={VEGETATION} />
        <LayerRow name="soilsgrid" checked />
        <Legend items={SOILS} heavy />
      </Tree>
    </TocPanel>
  );
}

function TaskbarView() {
  return (
    <Taskbar>
      <StartButton type="button" aria-label="start">
        <svg width="20" height="20" viewBox="0 0 20 20" fill="#fff" aria-hidden="true">
          <path d="M0 3l8-1.200V9.500H0zM9 1.600L20 0v9.500H9zM0 10.500h8v7.700L0 17zM9 10.500h11V20L9 18.400z" />
        </svg>
      </StartButton>
      <SearchBox>
        <svg width="22" height="22" viewBox="0 0 22 22" fill="none" stroke="#222" strokeWidth="1.600" aria-hidden="true">
          <circle cx="13.500" cy="8" r="6.500" />
          <path d="M9 13l-7 8" />
        </svg>
        <SearchInput type="text" placeholder="在这里输入你要搜索的内容" aria-label="search" />
      </SearchBox>
      <TrayButton type="button" aria-label="cortana" $width={60}>
        <svg width="20" height="20" viewBox="0 0 20 20" aria-hidden="true">
          <circle cx="10" cy="10" r="8" fill="none" stroke="#fff" strokeWidth="2.400" />
        </svg>
      </TrayButton>
      <TaskDivider $left={6} $right={16} />
      <TaskButton type="button" aria-label="chrome">
        <svg width="28" height="28" viewBox="0 0 28 28" aria-hidden="true">
          <path d="M14 14L2.300 7.200A13.500 13.500 0 0 1 26 8H14z" fill="#de4032" />
          <path d="M14 14l12-6.200A13.500 13.500 0 0 1 13 27.500z" fill="#fcc934" />
          <path d="M14 14L13.500 27.500A13.500 13.500 0 0 1 2.300 7z" fill="#2a9d4c" />
          <circle cx="14" cy="14" r="6.300" fill="#fff" />
          <circle cx="14" cy="14" r="4.800" fill="#4286f4" />
        </svg>
      </TaskButton>
      <TaskButton type="button" aria-label="powerpoint" $state="open">
        <svg width="30" height="28" viewBox="0 0 30 28" aria-hidden="true">
          <circle cx="16" cy="14" r="13" fill="#c8402c" />
          <path d="M16 1a13 13 0 0 1 13 13H16z" fill="#f08070" />
          <path d="M16 14h13a13 13 0 0 1-3 8z" fill="#dc5848" />
          <rect x="1" y="7" width="14" height="14" rx="1.500" fill="#b42c20" />
          <text x="4.500" y="18" fill="#fff" fontSize="12" fontWeight="700" fontFamily="Noto Sans, sans-serif">P</text>
        </svg>
      </TaskButton>
      <TaskButton type="button" aria-label="arcmap" $state="active"><Icon name="arcmap" size={28} /></TaskButton>
      <TaskButton type="button" aria-label="explorer" $state="open">
        <svg width="30" height="26" viewBox="0 0 30 26" aria-hidden="true">
          <path d="M1 2h11l2 3h15v17H1z" fill="#e8b63c" />
          <path d="M1 7h28v16H1z" fill="#ffdf7c" />
          <path d="M6 25v-9q0-2 2-2h14q2 0 2 2v9h-4v-6H10v6z" fill="#3a9be0" />
        </svg>
      </TaskButton>
      <TaskButton type="button" aria-label="pdf" $state="open">
        <svg width="26" height="26" viewBox="0 0 26 26" aria-hidden="true">
          <rect width="26" height="26" rx="1" fill="#f6eaf4" />
          <path d="M0 0h26v7Q14 2 0 16z" fill="#b49ad8" />
          <path d="M11 3q3 5 2 9-2 7-8 10 7-5 19-4-8-3-11-15z" fill="none" stroke="#e0183c" strokeWidth="1.600" />
        </svg>
      </TaskButton>
      <Tray>
        <TaskDivider />
        <DesktopLabel type="button">桌面</DesktopLabel>
        <Chevrons>»</Chevrons>
        <TaskDivider $right={15} />
        <Ime type="button">拼</Ime>
        <TrayButton type="button" aria-label="power" $width={92}>
          <svg width="92" height="26" viewBox="0 0 92 26" aria-hidden="true">
            <path d="M38 25v-4q-5-3-4-9 1-6 4-10 4 5 4 11t-3 8v4z" fill="#f4f4f4" />
            <path d="M38 21V9M38 15l3-3M38 18l-3-4" stroke="#333" />
            <rect x="48" y="3" width="38" height="20" fill="#25a550" stroke="#f4f4f4" strokeWidth="2" />
            <path d="M87 8h3v10h-3z" fill="#f4f4f4" />
            <text x="67" y="18" fill="#fff" fontSize="13" textAnchor="middle" fontFamily="Noto Sans, sans-serif">99%</text>
          </svg>
        </TrayButton>
        <TrayButton type="button" aria-label="hidden icons" $width={28}>
          <svg width="18" height="12" viewBox="0 0 18 12" aria-hidden="true">
            <path d="M1 10l8-8 8 8" fill="none" stroke="#f4f4f4" strokeWidth="1.600" />
          </svg>
        </TrayButton>
        <TrayButton type="button" aria-label="microphone" $width={30}>
          <svg width="14" height="22" viewBox="0 0 14 22" aria-hidden="true">
            <rect x="3" y="1" width="8" height="14" rx="1" fill="#fff" />
            <path d="M1 11v3q0 4 6 4t6-4v-3M7 18v3M4 21h6" fill="none" stroke="#fff" strokeWidth="1.400" />
          </svg>
        </TrayButton>
        <TrayButton type="button" aria-label="volume" $width={31}>
          <svg width="22" height="18" viewBox="0 0 22 18" fill="none" stroke="#f4f4f4" strokeWidth="1.300" aria-hidden="true">
            <path d="M1 6v6h3l5 4V2L4 6zM12 6q2 3 0 6" />
            <path d="M15 4q4 5 0 10M18 2q5 7 0 14" stroke="#85857c" />
          </svg>
        </TrayButton>
        <TrayButton type="button" aria-label="network" $width={33}>
          <svg width="18" height="18" viewBox="0 0 18 18" fill="none" stroke="#d8d8d0" strokeWidth="1.300" aria-hidden="true">
            <path d="M1 16Q2 3 16 2M5 16q1-9 11-10M9 16q1-5 7-6" />
            <circle cx="14.500" cy="15" r="1.200" fill="#fff" />
          </svg>
        </TrayButton>
        <TrayButton type="button" aria-label="keyboard" $width={36}>
          <svg width="30" height="18" viewBox="0 0 30 18" fill="none" stroke="#f4f4f4" aria-hidden="true">
            <path d="M1 1h28v16H1z" strokeWidth="1.400" />
            <path d="M4 5h22M4 9h22" strokeWidth="1.600" strokeDasharray="2 2" />
            <path d="M4 13h2M8 13h14M24 13h2" strokeWidth="1.600" />
          </svg>
        </TrayButton>
        <Clock>14:58<br />2020/6/9</Clock>
        <TrayButton type="button" aria-label="notifications" $width={62}>
          <svg width="22" height="22" viewBox="0 0 22 22" aria-hidden="true">
            <path d="M1 1h19v15H10l-4 4v-4H1z" fill="#fff" />
            <path d="M4 5h13M4 8h13M4 11h8" stroke="#333" strokeWidth="1.200" />
            <path d="M15 9q5 3 1 7-2 2-5 0 2 6 7 3 5-5-3-10z" fill="#fff" stroke="#333" />
          </svg>
        </TrayButton>
        <PeekEdge />
      </Tray>
    </Taskbar>
  );
}

export default function App() {
  return (
    <Screen>
      <GlobalStyle />
      <TitleBar>
        <Icon name="arcmap" size={20} />
        <WindowTitle>EX8.mxd - ArcMap</WindowTitle>
        <CaptionButton type="button" aria-label="minimize">
          <svg width="14" height="14" viewBox="0 0 14 14" aria-hidden="true"><path d="M1 7.500h12" stroke="#111" /></svg>
        </CaptionButton>
        <CaptionButton type="button" aria-label="restore">
          <svg width="14" height="14" viewBox="0 0 14 14" fill="none" stroke="#111" aria-hidden="true">
            <path d="M1.500 3.500h9v9h-9zM3.500 3.500v-2h9v9h-2" />
          </svg>
        </CaptionButton>
        <CaptionButton type="button" aria-label="close window">
          <svg width="14" height="14" viewBox="0 0 14 14" aria-hidden="true"><path d="M1 1l12 12M13 1L1 13" stroke="#111" strokeWidth="1.200" /></svg>
        </CaptionButton>
      </TitleBar>
      <MenuBar>
        {MENUS.map((m) => <MenuItem key={m} type="button">{m}</MenuItem>)}
      </MenuBar>
      <ToolbarArea>
        <ToolbarRow>
          <Toolbar>
            <Grip />
            <Tools items={["newdoc", "open", "save", "print", "|", "cut", "copy", "paste", "del", "|", "undo", "redo", "|", "add+", "|"]} />
            <ComboBox $width={148} $disabled>
              <ComboSelect aria-label="scale" disabled />
              <svg width="10" height="8" viewBox="0 0 10 8" aria-hidden="true"><path d="M1 2l4 4 4-4" fill="none" stroke="#c4c4c4" strokeWidth="1.500" /></svg>
            </ComboBox>
            <Divider />
            <Tools items={["editor", "|", "toc", "catalog", "search", "toolbox", "python", "|", "model"]} active="editor" />
            <OverflowButton />
          </Toolbar>
        </ToolbarRow>
        <ToolbarRow>
          <Toolbar>
            <Grip />
            <Tools
              active="pan"
              items={["zoomin", "zoomout", "pan", "globe", "|", "fixin", "fixout", "|", "back", "forward", "|", "selfeat+", "clearsel", "|", "arrow", "|", "info", "link", "popup", "|", "measure", "|", "find", "route", "gotoxy", "|", "time", "|", "viewer"]}
            />
            <OverflowButton />
          </Toolbar>
          <Toolbar>
            <Grip />
            <TextTool type="button">编辑器(R)<Caret /></TextTool>
            <Tools
              items={["|", "edittool", "editanno", "|", "line", "arc", "trace+", "point", "|", "vertices", "reshape", "cutpoly", "split", "rotate", "|", "attrs", "sketch", "|", "feature"]}
            />
            <OverflowButton />
          </Toolbar>
          <Toolbar>
            <Grip />
            <ComboBox $width={178}>
              <Icon name="rasterlayer" size={17} />
              <ComboSelect aria-label="layer" defaultValue="soilsgrid">
                <option>soilsgrid</option>
              </ComboSelect>
              <svg width="10" height="6" viewBox="0 0 10 6" aria-hidden="true"><path d="M0 0h10L5 6z" fill="#111" /></svg>
            </ComboBox>
            <Tools items={["contour", "histogram"]} />
            <OverflowButton />
          </Toolbar>
        </ToolbarRow>
      </ToolbarArea>
      <Workspace>
        <TableOfContents />
        <MapColumn>
          <MapAndScroll>
            <MapCanvas><SoilMap /></MapCanvas>
            <VScroll>
              <ScrollButton type="button" aria-label="scroll up"><Chevron dir="up" /></ScrollButton>
              <VThumb />
              <ScrollButton type="button" aria-label="scroll down"><Chevron dir="down" /></ScrollButton>
            </VScroll>
          </MapAndScroll>
          <BottomStrip>
            <ViewButton type="button" aria-label="data view" $active><Icon name="dataview" size={12} /></ViewButton>
            <ViewButton type="button" aria-label="layout view"><Icon name="layoutview" size={12} /></ViewButton>
            <Divider />
            <ViewButton type="button" aria-label="refresh"><Icon name="refresh" size={13} /></ViewButton>
            <ViewButton type="button" aria-label="pause"><Icon name="pause" size={12} /></ViewButton>
            <ViewButton type="button" aria-label="scroll left"><Chevron dir="left" /></ViewButton>
            <HThumb />
            <ViewButton type="button" aria-label="scroll right"><Chevron dir="right" /></ViewButton>
          </BottomStrip>
        </MapColumn>
        <SideRail>
          <SideTab type="button"><Icon name="catalog" /><span>目录</span></SideTab>
          <SideTab type="button"><Icon name="search" /><span>搜索</span></SideTab>
          <RailSpacer />
          <Gauge />
          <RailFoot />
        </SideRail>
      </Workspace>
      <StatusBar>
        <Coordinate>504132.784</Coordinate>
        <Coordinate>4971047.241</Coordinate>
        <span>未知单位</span>
      </StatusBar>
      <TaskbarView />
    </Screen>
  );
}
